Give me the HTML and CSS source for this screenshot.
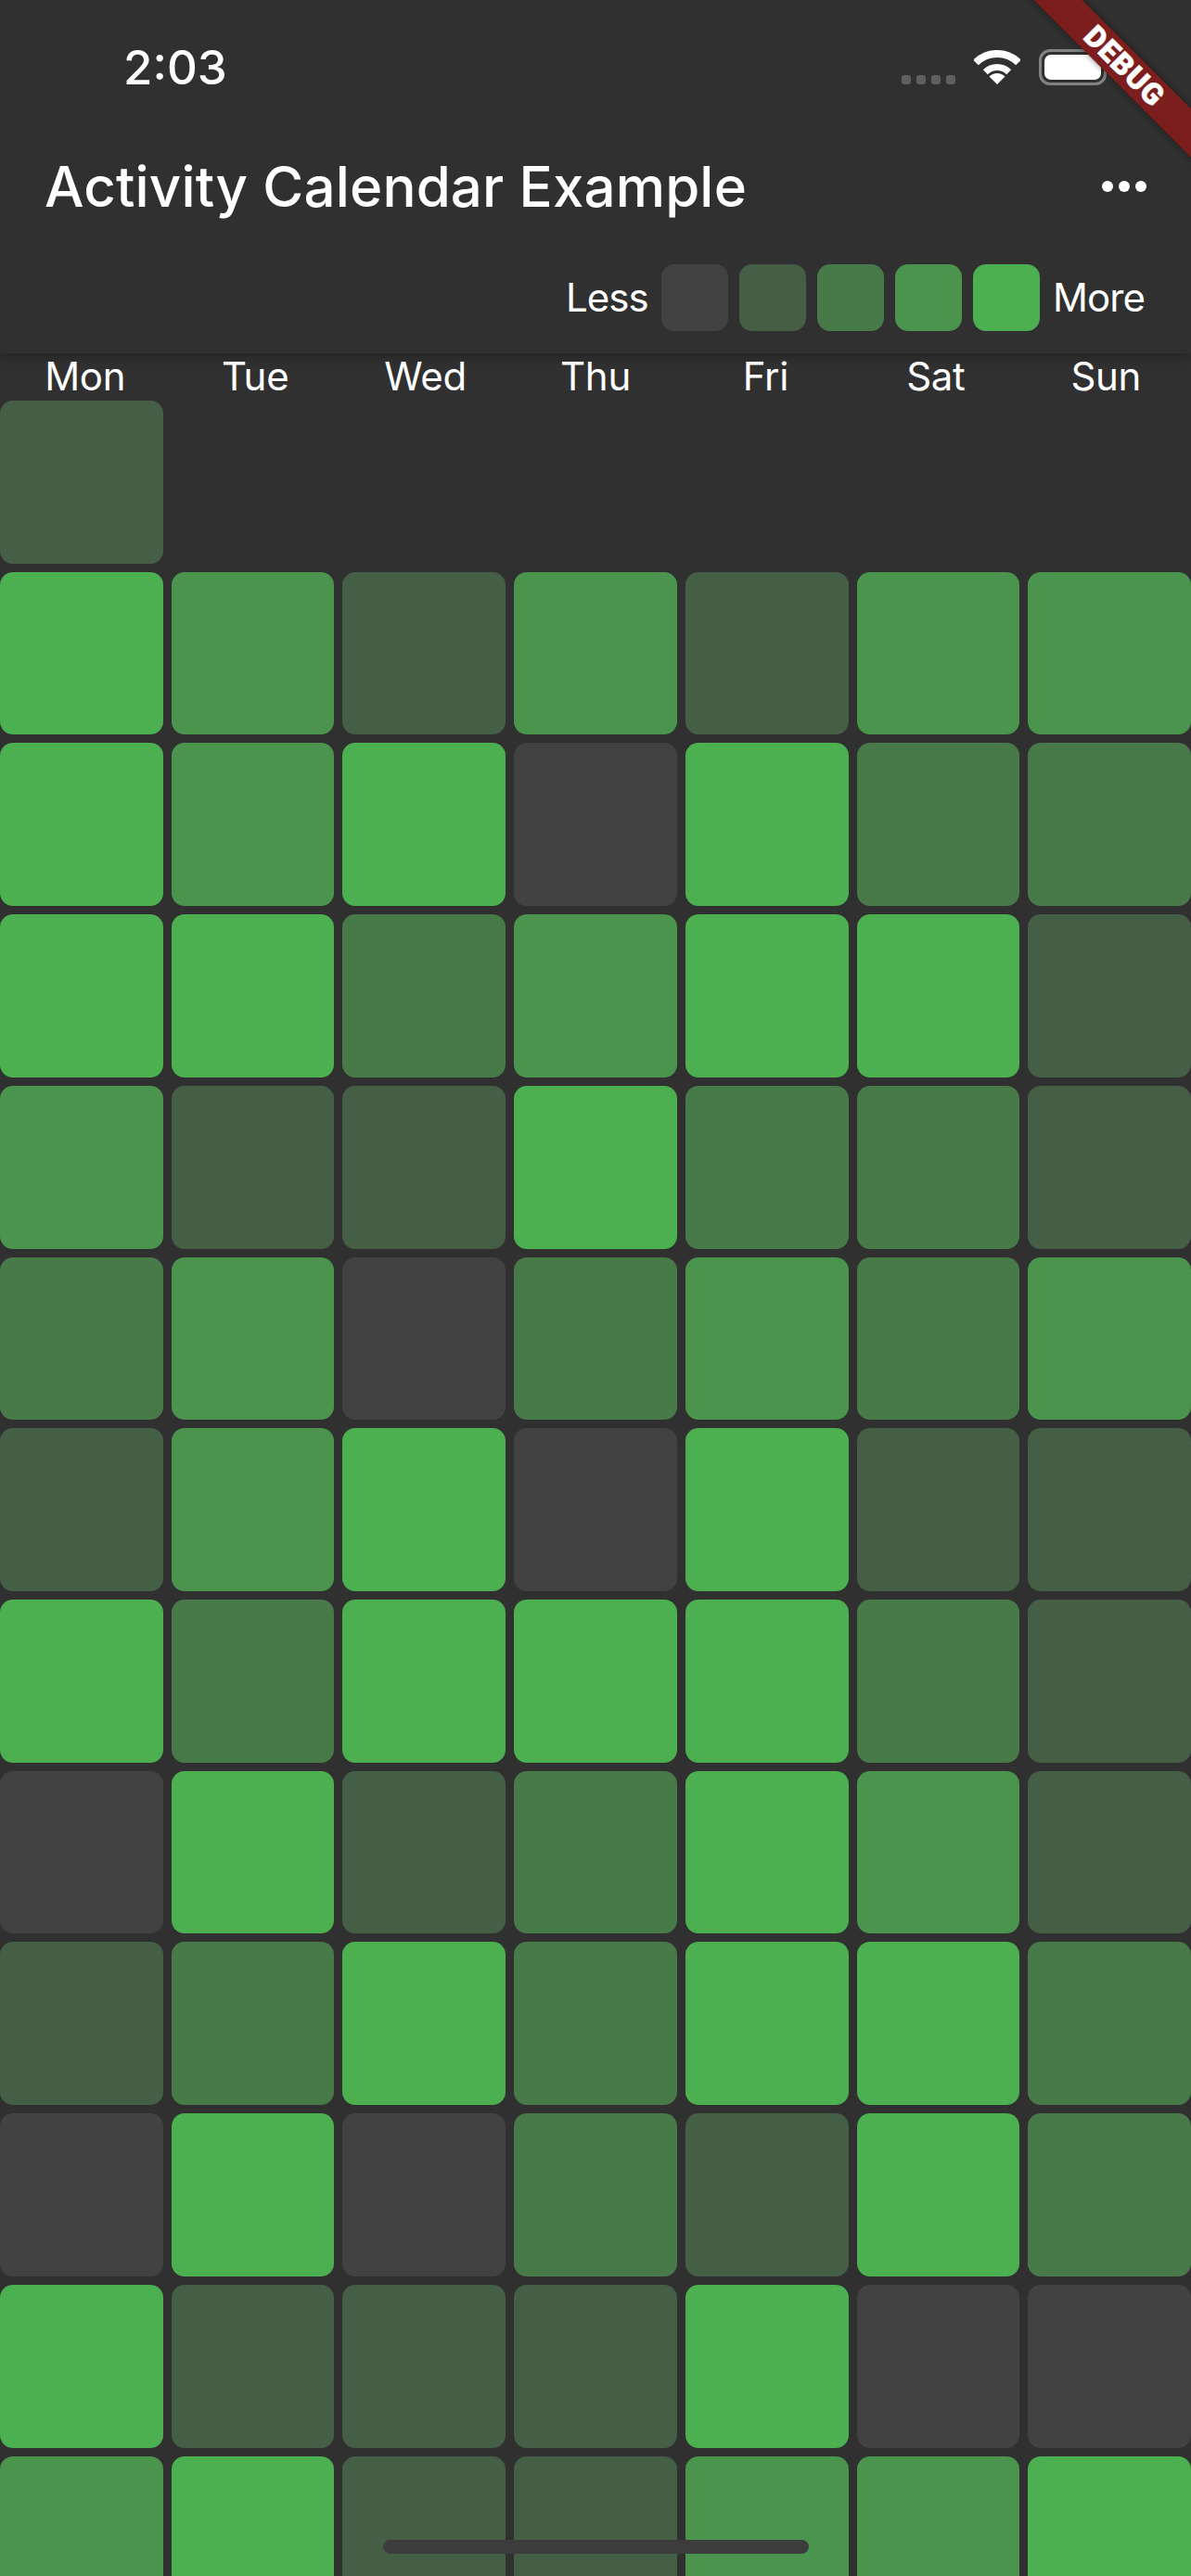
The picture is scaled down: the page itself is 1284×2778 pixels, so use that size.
FILE: index.html
```html
<!DOCTYPE html>
<html lang="en">
<head>
<meta charset="utf-8">
<title>Activity Calendar Example</title>
<link rel="stylesheet" href="styles.css">
</head>
<body>
<div class="screen">
  <header class="appbar">
    <div class="status">
      <span class="time">2:03</span>
      <span class="signal"><i></i><i></i><i></i><i></i></span>
      <svg class="wifi" viewBox="0 0 50 37" width="50" height="37" aria-hidden="true">
        <path d="M2 13.5A32.5 32.5 0 0 1 48 13.5" fill="none" stroke="#fff" stroke-width="8"/>
        <path d="M12.3 23.8A18 18 0 0 1 37.7 23.8" fill="none" stroke="#fff" stroke-width="7"/>
        <path d="M25 37L16.5 28.5A12 12 0 0 1 33.5 28.5Z" fill="#fff"/>
      </svg>
      <span class="battery"><span class="battery-body"><span class="battery-fill"></span></span><span class="battery-tip"></span></span>
    </div>
    <div class="toolbar">
      <h1 class="title">Activity Calendar Example</h1>
      <span class="more-menu"><i></i><i></i><i></i></span>
    </div>
    <div class="legend">
      <span class="legend-label">Less</span>
      <span class="swatch l0"></span>
      <span class="swatch l1"></span>
      <span class="swatch l2"></span>
      <span class="swatch l3"></span>
      <span class="swatch l4"></span>
      <span class="legend-label">More</span>
    </div>
  </header>

  <div class="weekdays">
    <span>Mon</span><span>Tue</span><span>Wed</span><span>Thu</span><span>Fri</span><span>Sat</span><span>Sun</span>
  </div>

  <main class="grid">
    <div class="cell l1"></div><div></div><div></div><div></div><div></div><div></div><div></div>
    <div class="cell l4"></div><div class="cell l3"></div><div class="cell l1"></div><div class="cell l3"></div><div class="cell l1"></div><div class="cell l3"></div><div class="cell l3"></div>
    <div class="cell l4"></div><div class="cell l3"></div><div class="cell l4"></div><div class="cell l0"></div><div class="cell l4"></div><div class="cell l2"></div><div class="cell l2"></div>
    <div class="cell l4"></div><div class="cell l4"></div><div class="cell l2"></div><div class="cell l3"></div><div class="cell l4"></div><div class="cell l4"></div><div class="cell l1"></div>
    <div class="cell l3"></div><div class="cell l1"></div><div class="cell l1"></div><div class="cell l4"></div><div class="cell l2"></div><div class="cell l2"></div><div class="cell l1"></div>
    <div class="cell l2"></div><div class="cell l3"></div><div class="cell l0"></div><div class="cell l2"></div><div class="cell l3"></div><div class="cell l2"></div><div class="cell l3"></div>
    <div class="cell l1"></div><div class="cell l3"></div><div class="cell l4"></div><div class="cell l0"></div><div class="cell l4"></div><div class="cell l1"></div><div class="cell l1"></div>
    <div class="cell l4"></div><div class="cell l2"></div><div class="cell l4"></div><div class="cell l4"></div><div class="cell l4"></div><div class="cell l2"></div><div class="cell l1"></div>
    <div class="cell l0"></div><div class="cell l4"></div><div class="cell l1"></div><div class="cell l2"></div><div class="cell l4"></div><div class="cell l3"></div><div class="cell l1"></div>
    <div class="cell l1"></div><div class="cell l2"></div><div class="cell l4"></div><div class="cell l2"></div><div class="cell l4"></div><div class="cell l4"></div><div class="cell l2"></div>
    <div class="cell l0"></div><div class="cell l4"></div><div class="cell l0"></div><div class="cell l2"></div><div class="cell l1"></div><div class="cell l4"></div><div class="cell l2"></div>
    <div class="cell l4"></div><div class="cell l1"></div><div class="cell l1"></div><div class="cell l1"></div><div class="cell l4"></div><div class="cell l0"></div><div class="cell l0"></div>
    <div class="cell l3"></div><div class="cell l4"></div><div class="cell l1"></div><div class="cell l1"></div><div class="cell l3"></div><div class="cell l3"></div><div class="cell l4"></div>
  </main>

  <div class="ribbon">DEBUG</div>
  <div class="home-indicator"></div>
</div>
</body>
</html>
```

FILE: styles.css
```css
* { box-sizing: border-box; }

html, body {
  margin: 0;
  padding: 0;
  background: #303030;
}

.screen {
  position: relative;
  width: 1284px;
  height: 2778px;
  overflow: hidden;
  background: #303030;
  color: #fff;
  font-family: Inter, "Liberation Sans", sans-serif;
}

.appbar {
  position: relative;
  z-index: 1;
  background: #303030;
  box-shadow: 0 5px 10px rgba(0, 0, 0, 0.2);
}

.status {
  position: relative;
  z-index: 3;
  height: 141px;
  padding: 53px 84px 0 133px;
  display: flex;
  align-items: flex-start;
}

.time {
  font-size: 51px;
  line-height: 40px;
  font-weight: 500;
  margin-right: auto;
}

.signal {
  display: flex;
  gap: 6px;
  margin-top: 28px;
  margin-right: 20px;
}

.signal i {
  display: block;
  width: 10px;
  height: 10px;
  border-radius: 3px;
  background: #5f5f5f;
}

.wifi {
  display: block;
  margin-top: 1px;
  margin-right: 20px;
}

.battery {
  display: flex;
  align-items: center;
}

.battery-body {
  display: block;
  width: 73px;
  height: 39px;
  padding: 3px;
  border: 3px solid rgba(255, 255, 255, 0.4);
  border-radius: 12px;
}

.battery-fill {
  display: block;
  width: 100%;
  height: 100%;
  background: #fff;
  border-radius: 7px;
}

.battery-tip {
  display: block;
  width: 5px;
  height: 13px;
  margin-left: 2px;
  border-radius: 0 4px 4px 0;
  background: rgba(255, 255, 255, 0.4);
}

.toolbar {
  height: 120px;
  padding: 0 48px;
  display: flex;
  align-items: center;
  justify-content: space-between;
}

.title {
  margin: 0;
  font-size: 60px;
  line-height: 72px;
  font-weight: 500;
  letter-spacing: 0.15px;
}

.more-menu {
  display: flex;
  gap: 6px;
}

.more-menu i {
  display: block;
  width: 12px;
  height: 12px;
  border-radius: 50%;
  background: #fff;
}

.legend {
  height: 120px;
  padding: 24px 48px 24px 0;
  display: flex;
  align-items: center;
  justify-content: flex-end;
  gap: 12px;
}

.legend-label {
  font-size: 42px;
  line-height: 50px;
  margin: 0 2px;
  letter-spacing: -0.9px;
}

.swatch {
  display: block;
  width: 72px;
  height: 72px;
  border-radius: 14px;
}

.weekdays {
  height: 51px;
  display: grid;
  grid-template-columns: repeat(7, 1fr);
  text-align: center;
  font-size: 42px;
  line-height: 50px;
  letter-spacing: -0.3px;
}

.grid {
  display: grid;
  grid-template-columns: repeat(7, 1fr);
  gap: 9px;
}

.cell {
  aspect-ratio: 1;
  border-radius: 14px;
}

.l0 { background: #424242; }
.l1 { background: #455e46; }
.l2 { background: #477949; }
.l3 { background: #4a944d; }
.l4 { background: #4caf50; }

.ribbon {
  position: absolute;
  z-index: 2;
  left: 1012px;
  top: 53px;
  width: 400px;
  height: 37px;
  transform: rotate(45deg);
  background: #7d1e1e;
  box-shadow: 0 0 6px rgba(0, 0, 0, 0.5);
  text-align: center;
  font-family: Roboto, "Liberation Sans", sans-serif;
  font-size: 32px;
  line-height: 37px;
  font-weight: 900;
  letter-spacing: 1px;
  -webkit-text-stroke: 0.6px #fff;
}

.home-indicator {
  position: absolute;
  z-index: 4;
  left: 413px;
  top: 2739px;
  width: 459px;
  height: 15px;
  border-radius: 8px;
  background: #3c3c3c;
}
```
